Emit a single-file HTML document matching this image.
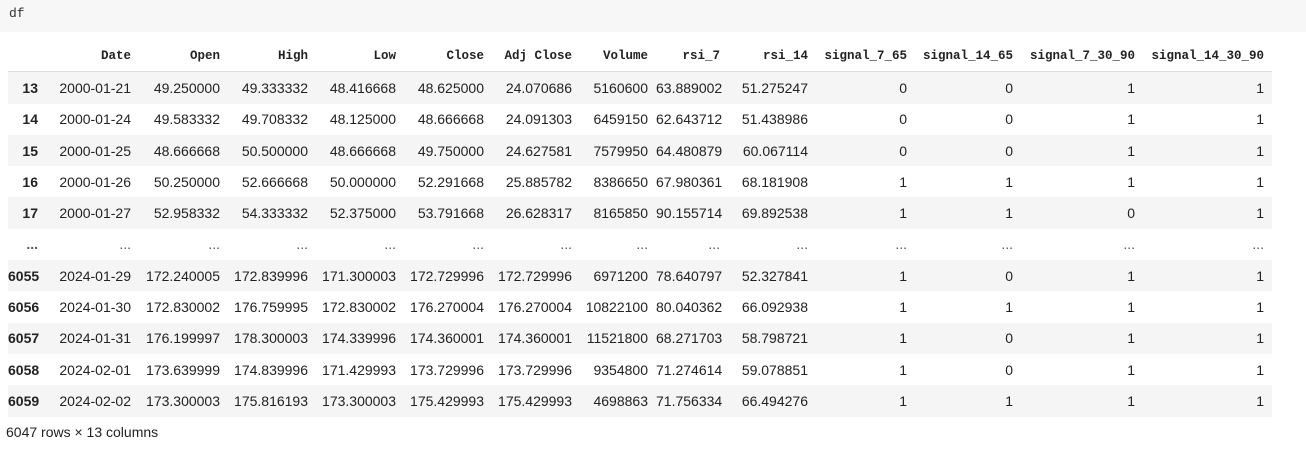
<!DOCTYPE html><html><head><style>
body{margin:0;background:#fff;width:1306px;height:452px;overflow:hidden;font-family:"Liberation Sans",Arial,sans-serif;}
.code{position:absolute;left:0;top:0;width:1306px;height:32px;background:#f7f7f7;}
.code span{position:absolute;left:9px;top:6px;font-family:"Liberation Mono",monospace;font-size:13px;color:#333;}
table{position:absolute;left:8px;top:40px;border-collapse:collapse;table-layout:fixed;width:1264px;font-size:14px;color:#222;}
td,th{padding:0 8px 0 0;text-align:right;height:31.3px;white-space:nowrap;}
th{font-family:"Liberation Mono",monospace;font-weight:bold;font-size:12.5px;color:#222;}
thead tr{border-bottom:1px solid #ddd;}
tbody tr:nth-child(odd){background:#f5f5f5;}
tbody th{font-family:"Liberation Sans",Arial,sans-serif;font-size:14px;}
.foot{position:absolute;left:6px;top:424px;font-size:14px;color:#222;}
.d td,.d th{color:#555;font-size:14px;}
</style></head><body>
<div class="code"><span>df</span></div>
<table>
<colgroup><col style="width:38px"><col style="width:93px"><col style="width:89px"><col style="width:88px"><col style="width:88px"><col style="width:88px"><col style="width:88px"><col style="width:76px"><col style="width:72px"><col style="width:88px"><col style="width:99px"><col style="width:106px"><col style="width:122px"><col style="width:129px"></colgroup>
<thead><tr><th></th><th>Date</th><th>Open</th><th>High</th><th>Low</th><th>Close</th><th>Adj Close</th><th>Volume</th><th>rsi_7</th><th>rsi_14</th><th>signal_7_65</th><th>signal_14_65</th><th>signal_7_30_90</th><th>signal_14_30_90</th></tr></thead>
<tbody>
<tr><th>13</th><td>2000-01-21</td><td>49.250000</td><td>49.333332</td><td>48.416668</td><td>48.625000</td><td>24.070686</td><td>5160600</td><td>63.889002</td><td>51.275247</td><td>0</td><td>0</td><td>1</td><td>1</td></tr>
<tr><th>14</th><td>2000-01-24</td><td>49.583332</td><td>49.708332</td><td>48.125000</td><td>48.666668</td><td>24.091303</td><td>6459150</td><td>62.643712</td><td>51.438986</td><td>0</td><td>0</td><td>1</td><td>1</td></tr>
<tr><th>15</th><td>2000-01-25</td><td>48.666668</td><td>50.500000</td><td>48.666668</td><td>49.750000</td><td>24.627581</td><td>7579950</td><td>64.480879</td><td>60.067114</td><td>0</td><td>0</td><td>1</td><td>1</td></tr>
<tr><th>16</th><td>2000-01-26</td><td>50.250000</td><td>52.666668</td><td>50.000000</td><td>52.291668</td><td>25.885782</td><td>8386650</td><td>67.980361</td><td>68.181908</td><td>1</td><td>1</td><td>1</td><td>1</td></tr>
<tr><th>17</th><td>2000-01-27</td><td>52.958332</td><td>54.333332</td><td>52.375000</td><td>53.791668</td><td>26.628317</td><td>8165850</td><td>90.155714</td><td>69.892538</td><td>1</td><td>1</td><td>0</td><td>1</td></tr>
<tr class="d" style="background:#fff"><th>...</th><td>...</td><td>...</td><td>...</td><td>...</td><td>...</td><td>...</td><td>...</td><td>...</td><td>...</td><td>...</td><td>...</td><td>...</td><td>...</td></tr>
<tr style="background:#f5f5f5"><th>6055</th><td>2024-01-29</td><td>172.240005</td><td>172.839996</td><td>171.300003</td><td>172.729996</td><td>172.729996</td><td>6971200</td><td>78.640797</td><td>52.327841</td><td>1</td><td>0</td><td>1</td><td>1</td></tr>
<tr style="background:#fff"><th>6056</th><td>2024-01-30</td><td>172.830002</td><td>176.759995</td><td>172.830002</td><td>176.270004</td><td>176.270004</td><td>10822100</td><td>80.040362</td><td>66.092938</td><td>1</td><td>1</td><td>1</td><td>1</td></tr>
<tr style="background:#f5f5f5"><th>6057</th><td>2024-01-31</td><td>176.199997</td><td>178.300003</td><td>174.339996</td><td>174.360001</td><td>174.360001</td><td>11521800</td><td>68.271703</td><td>58.798721</td><td>1</td><td>0</td><td>1</td><td>1</td></tr>
<tr style="background:#fff"><th>6058</th><td>2024-02-01</td><td>173.639999</td><td>174.839996</td><td>171.429993</td><td>173.729996</td><td>173.729996</td><td>9354800</td><td>71.274614</td><td>59.078851</td><td>1</td><td>0</td><td>1</td><td>1</td></tr>
<tr style="background:#f5f5f5"><th>6059</th><td>2024-02-02</td><td>173.300003</td><td>175.816193</td><td>173.300003</td><td>175.429993</td><td>175.429993</td><td>4698863</td><td>71.756334</td><td>66.494276</td><td>1</td><td>1</td><td>1</td><td>1</td></tr>
</tbody></table>
<div class="foot">6047 rows × 13 columns</div>
</body></html>
